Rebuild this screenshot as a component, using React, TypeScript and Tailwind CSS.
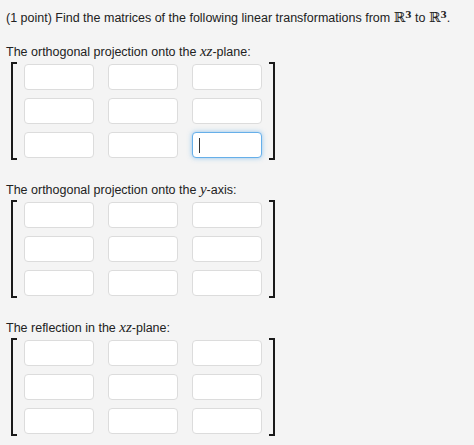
import React from 'react';

const sans = { fontFamily: '"Liberation Sans", Arial, sans-serif' };

function Bracket({ side }: { side: 'left' | 'right' }) {
  return (
    <div
      className={`w-[6px] border-y-2 border-[#1a1a1a] ${side === 'left' ? 'border-l-2' : 'border-r-2'}`}
    />
  );
}

function Cell({ focused }: { focused?: boolean }) {
  if (focused) {
    return (
      <div className="flex h-[26px] items-center rounded-[4px] border border-[#66afe9] bg-white pl-[6px] shadow-[0_0_5px_rgba(102,175,233,0.7)]">
        <div className="h-[15px] w-px bg-[#333]" />
      </div>
    );
  }
  return <div className="h-[26px] rounded-[4px] border border-[#dcdcdc] bg-white" />;
}

function Matrix({ focusLast }: { focusLast?: boolean }) {
  return (
    <div className="ml-[11px] mt-[3px] flex">
      <Bracket side="left" />
      <div className="grid grid-cols-[70px_70px_70px] gap-x-[14px] gap-y-[8px] px-[7px] py-[2px]">
        {Array.from({ length: 9 }).map((_, i) => (
          <Cell key={i} focused={focusLast && i === 8} />
        ))}
      </div>
      <Bracket side="right" />
    </div>
  );
}

function Var({ children }: { children: React.ReactNode }) {
  return (
    <span className="text-[15px] italic" style={{ fontFamily: '"Liberation Serif", "Times New Roman", serif' }}>
      {children}
    </span>
  );
}

function Section({ label, focusLast }: { label: React.ReactNode; focusLast?: boolean }) {
  return (
    <div>
      <div className="h-[16px] pl-[6px] text-[12.5px] leading-[16px] text-[#222]">{label}</div>
      <Matrix focusLast={focusLast} />
    </div>
  );
}

export default function App() {
  const R = (
    <span className="text-[14px]" style={{ fontFamily: '"DejaVu Serif", serif' }}>
      ℝ<sup className="text-[9px] font-bold">3</sup>
    </span>
  );
  return (
    <div className="h-[445px] w-[474px] overflow-hidden bg-[#f4f4f4]" style={sans}>
      <div className="h-[25px] pl-[6px] pt-[9px] text-[12.5px] leading-[16px] text-[#222]">
        (1 point) Find the matrices of the following linear transformations from {R} to {R}.
      </div>
      <div className="mt-[18px] flex flex-col gap-[21px]">
        <Section
          label={
            <>
              The orthogonal projection onto the <Var>xz</Var>-plane:
            </>
          }
          focusLast
        />
        <Section
          label={
            <>
              The orthogonal projection onto the <Var>y</Var>-axis:
            </>
          }
        />
        <Section
          label={
            <>
              The reflection in the <Var>xz</Var>-plane:
            </>
          }
        />
      </div>
    </div>
  );
}
